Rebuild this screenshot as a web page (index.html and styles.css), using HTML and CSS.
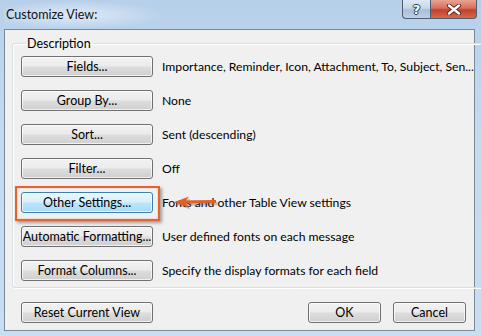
FILE: index.html
```html
<!DOCTYPE html>
<html lang="en">

<head>
  <meta charset="UTF-8">
  <title>Customize View</title>
  <link rel="stylesheet" href="styles.css">
</head>

<body>
  <div class="window">
    <div class="titlebar">
      <span class="title">Customize View:</span>
      <div class="caption-btns">
        <button class="cap help">?</button>
        <button class="cap close">
          <svg width="16" height="11" viewBox="0 0 16 11">
            <path d="M3 1.5 L13 9.5 M13 1.5 L3 9.5" stroke="#5a2222" stroke-width="4.2" stroke-linecap="round"/>
            <path d="M3 1.5 L13 9.5 M13 1.5 L3 9.5" stroke="#fff" stroke-width="2.4" stroke-linecap="round"/>
          </svg>
        </button>
      </div>
    </div>

    <div class="panel">
      <fieldset class="group">
        <legend>Description</legend>
        <div class="row">
          <button class="btn">Fields...</button>
          <span class="desc">Importance, Reminder, Icon, Attachment, To, Subject, Sen...</span>
        </div>
        <div class="row">
          <button class="btn">Group By...</button>
          <span class="desc">None</span>
        </div>
        <div class="row">
          <button class="btn">Sort...</button>
          <span class="desc">Sent (descending)</span>
        </div>
        <div class="row">
          <button class="btn">Filter...</button>
          <span class="desc">Off</span>
        </div>
        <div class="row marked">
          <button class="btn hot">Other Settings...</button>
          <span class="desc">Fonts and other Table View settings</span>
          <svg class="arrow" width="60" height="20" viewBox="0 0 60 20">
            <g transform="translate(1.5 2)" opacity="0.35">
              <path d="M6 9 L44 8.5" stroke="#555" stroke-width="3.4"/>
              <path d="M2 9.2 L17 3.5 L13 9 L17 14.5 Z" fill="#555"/>
            </g>
            <path d="M6 9 L44 8.5" stroke="#e25f26" stroke-width="2.8"/>
            <path d="M2 9.2 L17 3.5 L13 9 L17 14.5 Z" fill="#e25f26"/>
          </svg>
        </div>
        <div class="row">
          <button class="btn">Automatic Formatting...</button>
          <span class="desc">User defined fonts on each message</span>
        </div>
        <div class="row">
          <button class="btn">Format Columns...</button>
          <span class="desc">Specify the display formats for each field</span>
        </div>
      </fieldset>

      <div class="footer">
        <button class="btn">Reset Current View</button>
        <div class="footer-right">
          <button class="btn small">OK</button>
          <button class="btn small">Cancel</button>
        </div>
      </div>
    </div>
  </div>
</body>

</html>
```

FILE: styles.css
```css
* {
  box-sizing: border-box;
}

body {
  margin: 0;
  font-family: Lato, "Noto Sans", sans-serif;
  font-size: 12px;
  color: #000;
}

.window {
  width: 481px;
  height: 336px;
  padding: 0 6px 5px 4px;
  display: flex;
  flex-direction: column;
  background: linear-gradient(180deg, #b7d0ea 0%, #c4daf1 40%, #c9def3 100%);
}

.titlebar {
  height: 29px;
  flex: none;
  display: flex;
  justify-content: space-between;
  align-items: flex-start;
  background: radial-gradient(ellipse 90px 14px at 70px 15px, rgba(255, 255, 255, 0.55), rgba(255, 255, 255, 0) 100%);
}

.title {
  padding: 7px 0 0 2px;
  font-size: 12.5px;
  color: #111;
}

.caption-btns {
  display: flex;
  margin-right: -2px;
}

.cap {
  height: 19px;
  border: 1px solid #4f5d6e;
  border-top: none;
  padding: 0;
  margin: 0;
  display: flex;
  justify-content: center;
  align-items: center;
}

.help {
  width: 28px;
  border-radius: 0 0 0 4px;
  border-right: none;
  background: linear-gradient(180deg, #dde8f4 0%, #c9d7e6 45%, #aabfd6 55%, #bcd0e6 100%);
  color: #fff;
  font-family: "DejaVu Sans", sans-serif;
  font-weight: bold;
  font-size: 13px;
  text-shadow: 0 0 1px #2d3b4c, 1px 0 0 #2d3b4c, -1px 0 0 #2d3b4c, 0 1px 0 #2d3b4c, 0 -1px 0 #2d3b4c;
}

.close {
  width: 47px;
  border-radius: 0 0 4px 0;
  background: linear-gradient(180deg, #e8a493 0%, #d6705c 45%, #c2412b 55%, #d46a4d 100%);
}

.panel {
  flex: 1;
  border: 1px solid #7b8898;
  background: #f0f0f0;
  padding: 6px 4px 0 7px;
}

.group {
  margin: 0;
  width: 459px;
  height: 252px;
  border: 1px solid #d5dfe5;
  border-radius: 3px;
  box-shadow: inset 1px 1px 0 #fff, 1px 1px 0 #fff;
  padding: 5px 8px 0 8px;
  display: flex;
  flex-direction: column;
  gap: 13px;
}

.group legend {
  padding: 0 2px;
  margin-left: 4px;
  font-size: 12.5px;
  line-height: 15px;
}

.row {
  height: 21px;
  display: flex;
  align-items: center;
  gap: 9px;
}

.btn {
  width: 132px;
  height: 21px;
  flex: none;
  padding: 0;
  border: 1px solid #707070;
  border-radius: 3px;
  font-family: Lato, "Noto Sans", sans-serif;
  font-size: 12.5px;
  white-space: nowrap;
  color: #000;
  box-shadow: inset 0 0 0 1px rgba(255, 255, 255, 0.7);
  background: linear-gradient(180deg, #f2f2f2 0%, #ebebeb 48%, #dddddd 52%, #cfcfcf 100%);
}

.btn.hot {
  border-color: #3c7fb1;
  background: linear-gradient(180deg, #eaf6fd 0%, #d9f0fc 48%, #bee6fd 52%, #a7d9f5 100%);
}

.desc {
  white-space: nowrap;
  font-size: 12.2px;
}

.marked {
  position: relative;
}

.marked::before {
  content: '';
  position: absolute;
  left: -6px;
  top: -6px;
  width: 141px;
  height: 31px;
  border: 2px solid #e5632c;
  box-shadow: 2px 2px 3px rgba(0, 0, 0, 0.35), inset 0 0 2px rgba(0, 0, 0, 0.2);
  pointer-events: none;
}

.marked .arrow {
  position: absolute;
  left: 151px;
  top: 1px;
}

.footer {
  display: flex;
  justify-content: space-between;
  align-items: center;
  margin-top: 14px;
  padding: 0 4px 0 9px;
}

.footer-right {
  display: flex;
  gap: 12px;
}

.btn.small {
  width: 73px;
}
```
